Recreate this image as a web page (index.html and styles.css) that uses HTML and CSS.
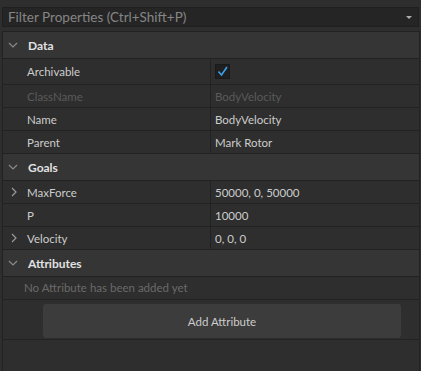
FILE: index.html
```html
<!DOCTYPE html>
<html lang="en">
<head>
    <meta charset="UTF-8">
    <meta name="viewport" content="width=device-width, initial-scale=1.0">
    <title>Properties</title>
    <link rel="stylesheet" href="styles.css">
</head>
<body>
    <div class="top-strip"></div>
    <div class="filter">
        <span class="filter-text">Filter Properties (Ctrl+Shift+P)</span>
        <span class="filter-arrow"></span>
    </div>
    <div class="panel">
        <div class="category">
            <svg class="chev" width="10" height="6" viewBox="0 0 10 6"><path d="M1 1 L5 5 L9 1" fill="none" stroke="#8a8a8a" stroke-width="1.2"/></svg>
            <span>Data</span>
        </div>
        <div class="row tall">
            <div class="name">Archivable</div>
            <div class="value">
                <span class="checkbox">
                    <svg width="13" height="13" viewBox="0 0 13 13"><path d="M2.5 6.5 L5.5 10 L11 2" fill="none" stroke="#3aa0ee" stroke-width="1.6"/></svg>
                </span>
            </div>
        </div>
        <div class="row disabled">
            <div class="name">ClassName</div>
            <div class="value">BodyVelocity</div>
        </div>
        <div class="row">
            <div class="name">Name</div>
            <div class="value">BodyVelocity</div>
        </div>
        <div class="row">
            <div class="name">Parent</div>
            <div class="value">Mark Rotor</div>
        </div>

        <div class="category">
            <svg class="chev" width="10" height="6" viewBox="0 0 10 6"><path d="M1 1 L5 5 L9 1" fill="none" stroke="#8a8a8a" stroke-width="1.2"/></svg>
            <span>Goals</span>
        </div>
        <div class="row">
            <div class="name">
                <svg class="expand" width="6" height="10" viewBox="0 0 6 10"><path d="M1 1 L5 5 L1 9" fill="none" stroke="#9a9a9a" stroke-width="1.2"/></svg>
                MaxForce
            </div>
            <div class="value">50000, 0, 50000</div>
        </div>
        <div class="row">
            <div class="name">P</div>
            <div class="value">10000</div>
        </div>
        <div class="row">
            <div class="name">
                <svg class="expand" width="6" height="10" viewBox="0 0 6 10"><path d="M1 1 L5 5 L1 9" fill="none" stroke="#9a9a9a" stroke-width="1.2"/></svg>
                Velocity
            </div>
            <div class="value">0, 0, 0</div>
        </div>

        <div class="category">
            <svg class="chev" width="10" height="6" viewBox="0 0 10 6"><path d="M1 1 L5 5 L9 1" fill="none" stroke="#8a8a8a" stroke-width="1.2"/></svg>
            <span>Attributes</span>
        </div>
        <div class="empty-note">No Attribute has been added yet</div>
        <div class="add-row">
            <button class="add-btn">Add Attribute</button>
        </div>
    </div>
</body>
</html>
```

FILE: styles.css
```css
body {
    font-family: Lato, "Open Sans", sans-serif;
    font-size: 11.5px;
    background-color: #2e2e2e;
    color: #cccccc;
    margin: 0;
    padding: 0;
    height: 371px;
    overflow: hidden;
}

.top-strip {
    height: 7px;
}

.filter {
    display: flex;
    align-items: center;
    justify-content: space-between;
    height: 18px;
    margin: 0 2px;
    padding: 0 6px 0 5px;
    background-color: #252525;
    border: 1px solid #1f1f1f;
}

.filter-text {
    color: #858585;
    font-size: 13.5px;
}

.filter-arrow {
    width: 0;
    height: 0;
    border-left: 3px solid transparent;
    border-right: 3px solid transparent;
    border-top: 3px solid #b0b0b0;
}

.panel {
    margin: 4px 1px 0 2px;
    border-top: 1px solid #222222;
    border-left: 1px solid #222222;
    border-right: 1px solid #222222;
    height: 340px;
}

.category {
    display: flex;
    align-items: center;
    height: 26px;
    padding-left: 5px;
    background-color: #353535;
    border-bottom: 1px solid #222222;
    font-weight: bold;
    font-size: 12px;
    color: #e2e2e2;
}

.category .chev {
    margin-right: 10px;
}

.row {
    display: flex;
    height: 22px;
    border-bottom: 1px solid #222222;
}

.row.tall {
    height: 25px;
}

.name {
    position: relative;
    width: 183px;
    padding-left: 24px;
    display: flex;
    align-items: center;
    border-right: 1px solid #222222;
}

.name .expand {
    position: absolute;
    left: 8px;
    top: 6px;
}

.value {
    flex: 1;
    padding-left: 4px;
    display: flex;
    align-items: center;
}

.row.disabled {
    color: #5a5a5a;
}

.checkbox {
    display: flex;
    align-items: center;
    justify-content: center;
    width: 13px;
    height: 13px;
    background-color: #1f1f1f;
    border: 1px solid #1a1a1a;
}

.empty-note {
    height: 22px;
    line-height: 22px;
    padding-left: 21px;
    color: #6a6a6a;
    border-bottom: 1px solid #222222;
}

.add-row {
    padding: 4px 18px 1px 40px;
    border-bottom: 1px solid #222222;
}

.add-btn {
    display: block;
    width: 100%;
    height: 34px;
    border: none;
    border-radius: 3px;
    background-color: #3c3c3c;
    color: #cccccc;
    font-family: inherit;
    font-size: 11.5px;
}
```
